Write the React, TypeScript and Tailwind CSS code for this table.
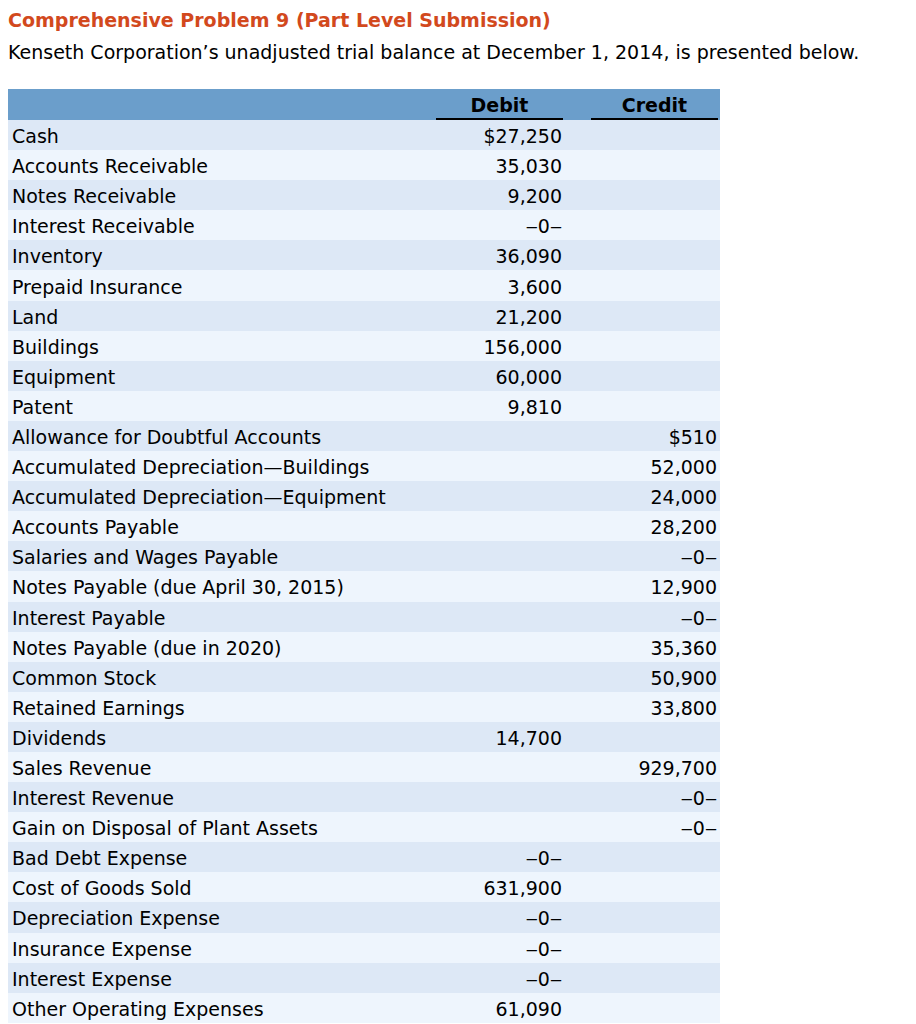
const rows: [string, string, string][] = [
  ["Cash", "$27,250", ""],
  ["Accounts Receivable", "35,030", ""],
  ["Notes Receivable", "9,200", ""],
  ["Interest Receivable", "-0-", ""],
  ["Inventory", "36,090", ""],
  ["Prepaid Insurance", "3,600", ""],
  ["Land", "21,200", ""],
  ["Buildings", "156,000", ""],
  ["Equipment", "60,000", ""],
  ["Patent", "9,810", ""],
  ["Allowance for Doubtful Accounts", "", "$510"],
  ["Accumulated Depreciation\u2014Buildings", "", "52,000"],
  ["Accumulated Depreciation\u2014Equipment", "", "24,000"],
  ["Accounts Payable", "", "28,200"],
  ["Salaries and Wages Payable", "", "-0-"],
  ["Notes Payable (due April 30, 2015)", "", "12,900"],
  ["Interest Payable", "", "-0-"],
  ["Notes Payable (due in 2020)", "", "35,360"],
  ["Common Stock", "", "50,900"],
  ["Retained Earnings", "", "33,800"],
  ["Dividends", "14,700", ""],
  ["Sales Revenue", "", "929,700"],
  ["Interest Revenue", "", "-0-"],
  ["Gain on Disposal of Plant Assets", "", "-0-"],
  ["Bad Debt Expense", "-0-", ""],
  ["Cost of Goods Sold", "631,900", ""],
  ["Depreciation Expense", "-0-", ""],
  ["Insurance Expense", "-0-", ""],
  ["Interest Expense", "-0-", ""],
  ["Other Operating Expenses", "61,090", ""],
];

// zero entries are shown as dash-0-dash; figure dash gets the width right
const fmt = (v: string) => (v === "-0-" ? "\u20120\u2012" : v);

export default function App() {
  return (
    <div className="min-h-screen bg-white px-2 pt-[8px] text-black" style={{ fontFamily: '"DejaVu Sans", Verdana, sans-serif' }}>
      <h1 className="text-[19px] font-bold leading-[24px] text-[#d2491d]">
        Comprehensive Problem 9 (Part Level Submission)
      </h1>
      <p className="mt-[8px] text-[19px] leading-[24px]">
        Kenseth Corporation&rsquo;s unadjusted trial balance at December 1, 2014, is presented below.
      </p>

      <table className="mt-[25px] w-[712px] border-collapse text-[19px]">
        <thead>
          <tr className="h-[31px] bg-[#6b9ecb]">
            <th className="w-[428px]" />
            <th className="w-[127px] align-bottom">
              <div className="border-b-2 border-black pb-[2px] text-center font-bold leading-[22px]">Debit</div>
            </th>
            <th className="w-[28px]" />
            <th className="w-[127px] align-bottom">
              <div className="border-b-2 border-black pb-[2px] text-center font-bold leading-[22px]">Credit</div>
            </th>
            <th className="w-[2px]" />
          </tr>
        </thead>
        <tbody>
          {rows.map(([name, debit, credit], i) => (
            <tr key={name} className={i % 2 === 0 ? "h-[30.1px] bg-[#dde8f6]" : "h-[30.1px] bg-[#eef5fd]"}>
              <td className="pl-1 pt-[2px] text-left leading-[24px]">{name}</td>
              <td className="pr-px pt-[2px] text-right leading-[24px]">{fmt(debit)}</td>
              <td />
              <td className="pr-px pt-[2px] text-right leading-[24px]">{fmt(credit)}</td>
              <td />
            </tr>
          ))}
        </tbody>
      </table>
    </div>
  );
}
